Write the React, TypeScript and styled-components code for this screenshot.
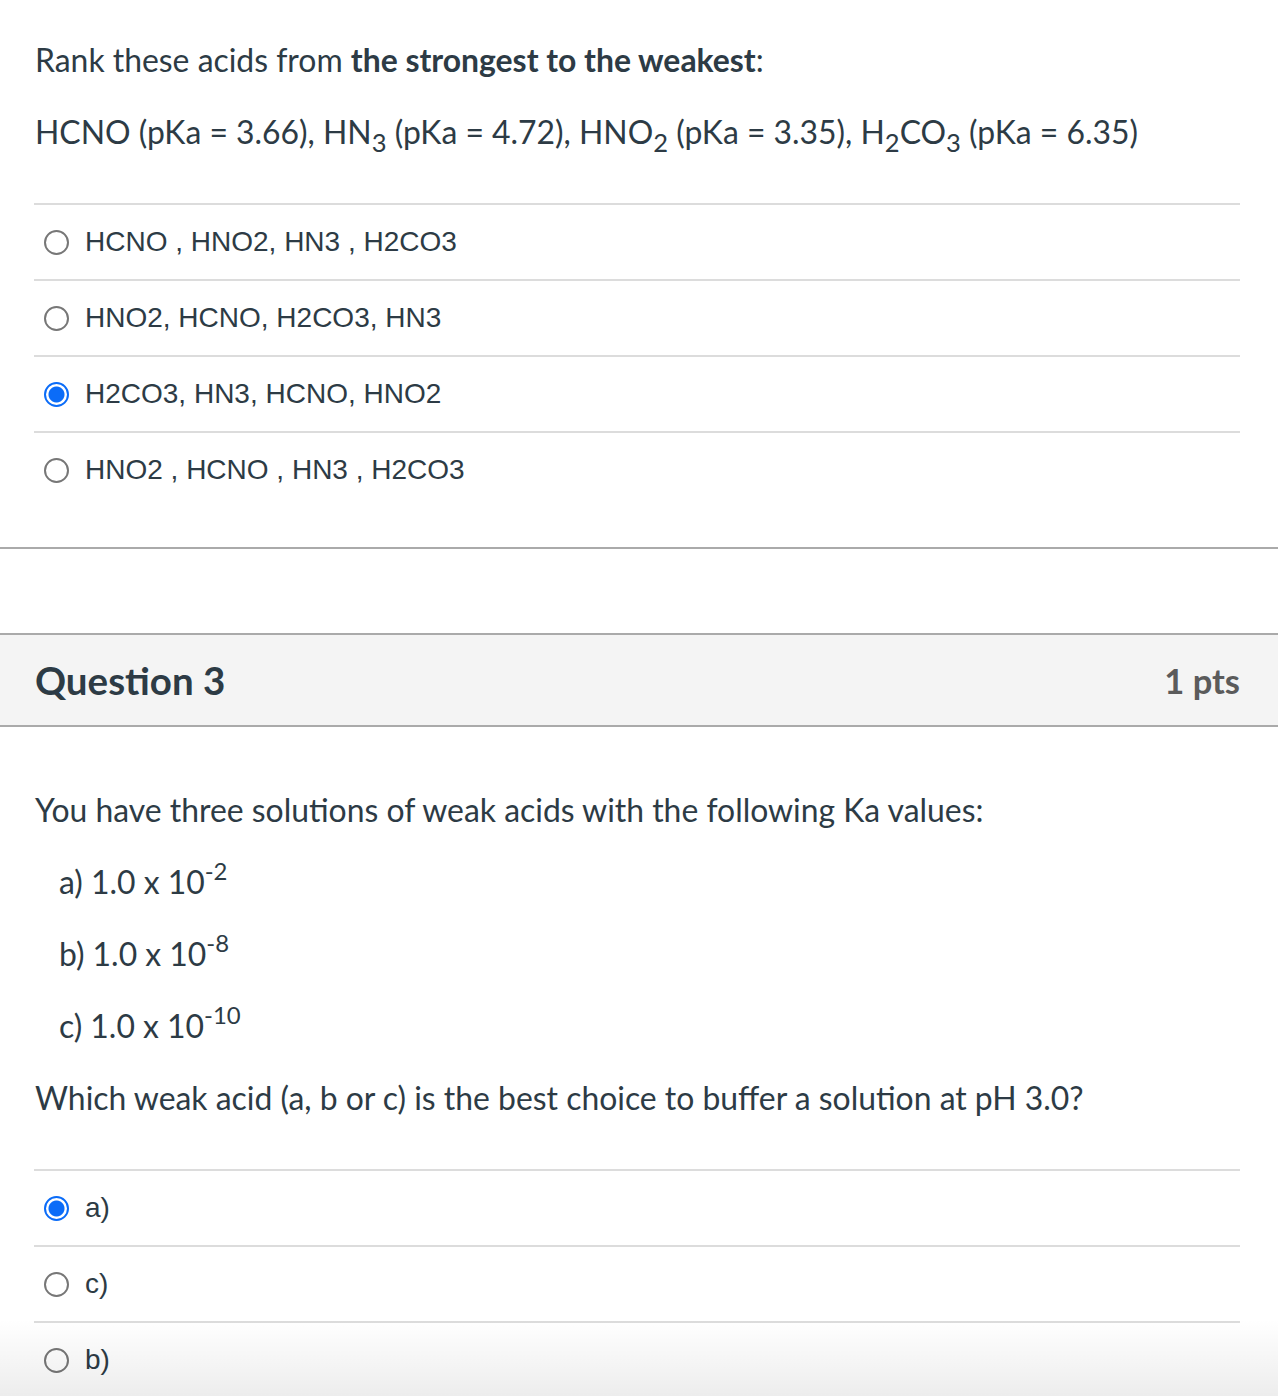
import styled, { createGlobalStyle } from "styled-components";

const GlobalStyle = createGlobalStyle`
  body {
    margin: 0;
    background: #ffffff;
    font-family: Lato, "Open Sans", sans-serif;
    color: #2d3b45;
  }
`;

const Page = styled.div`
  position: relative;
  min-height: 1396px;
  overflow: hidden;
`;

const Body = styled.div<{ $top: number }>`
  padding: ${(p) => p.$top}px 38px 0 35px;
`;

const Text = styled.p<{ $indent?: boolean }>`
  margin: 0 0 24px;
  padding-left: ${(p) => (p.$indent ? "24px" : "0")};
  font-size: 31.9px;
  line-height: 48px;

  sub {
    font-size: 0.8em;
    line-height: 0;
    vertical-align: -0.3em;
  }

  sup {
    font-size: 0.75em;
    line-height: 0;
    vertical-align: 0.6em;
  }
`;

const Answers = styled.div`
  margin-top: 47px;
  margin-left: -1px;
  border-top: 2px solid #dcdcdc;
`;

const Answer = styled.label<{ $last?: boolean }>`
  display: flex;
  align-items: center;
  gap: 16px;
  height: 74px;
  padding-left: 10px;
  border-bottom: 2px solid ${(p) => (p.$last ? "transparent" : "#dcdcdc")};
  font-family: "Liberation Sans", Arial, sans-serif;
  font-size: 28px;
`;

const Radio = styled.span<{ $checked?: boolean }>`
  width: 25px;
  height: 25px;
  box-sizing: border-box;
  border-radius: 50%;
  flex: none;
  border: 2px solid ${(p) => (p.$checked ? "#0b6cf8" : "#777777")};
  background: ${(p) =>
    p.$checked ? "radial-gradient(circle, #0b6cf8 0 7.5px, #ffffff 8.5px)" : "#ffffff"};
`;

const Divider = styled.hr`
  margin: 38px 0 0;
  border: none;
  border-top: 2px solid #aaaaaa;
`;

const Header = styled.div`
  margin-top: 84px;
  height: 90px;
  display: flex;
  align-items: center;
  justify-content: space-between;
  padding: 0 38px 0 35px;
  background: #f4f4f4;
  border-top: 2px solid #aaaaaa;
  border-bottom: 2px solid #aaaaaa;
`;

const Title = styled.h2`
  margin: 0;
  font-size: 38.5px;
  font-weight: 700;
  color: #2d3b45;
`;

const Points = styled.span`
  font-size: 34.5px;
  font-weight: 700;
  color: #5b5b5b;
`;

const Fade = styled.div`
  position: absolute;
  left: 0;
  right: 0;
  bottom: 0;
  height: 80px;
  background: linear-gradient(to bottom, rgba(0, 0, 0, 0), rgba(0, 0, 0, 0.075));
  pointer-events: none;
`;

const firstAnswers = [
  { text: "HCNO , HNO2, HN3 , H2CO3" },
  { text: "HNO2, HCNO, H2CO3, HN3" },
  { text: "H2CO3, HN3, HCNO, HNO2", checked: true },
  { text: "HNO2 , HCNO , HN3 , H2CO3" },
];

const secondAnswers = [
  { text: "a)", checked: true },
  { text: "c)" },
  { text: "b)" },
];

function App() {
  return (
    <Page>
      <GlobalStyle />
      <Body $top={36}>
        <Text>
          Rank these acids from <strong>the strongest to the weakest</strong>:
        </Text>
        <Text>
          HCNO (pKa = 3.66), HN<sub>3</sub> (pKa = 4.72), HNO<sub>2</sub> (pKa = 3.35), H
          <sub>2</sub>CO<sub>3</sub> (pKa = 6.35)
        </Text>
        <Answers>
          {firstAnswers.map((a, i) => (
            <Answer key={a.text} $last={i === firstAnswers.length - 1}>
              <Radio $checked={a.checked} />
              {a.text}
            </Answer>
          ))}
        </Answers>
      </Body>
      <Divider />
      <Header>
        <Title>Question 3</Title>
        <Points>1 pts</Points>
      </Header>
      <Body $top={59}>
        <Text>You have three solutions of weak acids with the following Ka values:</Text>
        <Text $indent>
          a) 1.0 x 10<sup>-2</sup>
        </Text>
        <Text $indent>
          b) 1.0 x 10<sup>-8</sup>
        </Text>
        <Text $indent>
          c) 1.0 x 10<sup>-10</sup>
        </Text>
        <Text>Which weak acid (a, b or c) is the best choice to buffer a solution at pH 3.0?</Text>
        <Answers>
          {secondAnswers.map((a, i) => (
            <Answer key={a.text} $last={i === secondAnswers.length - 1}>
              <Radio $checked={a.checked} />
              {a.text}
            </Answer>
          ))}
        </Answers>
      </Body>
      <Fade />
    </Page>
  );
}

export default App;
